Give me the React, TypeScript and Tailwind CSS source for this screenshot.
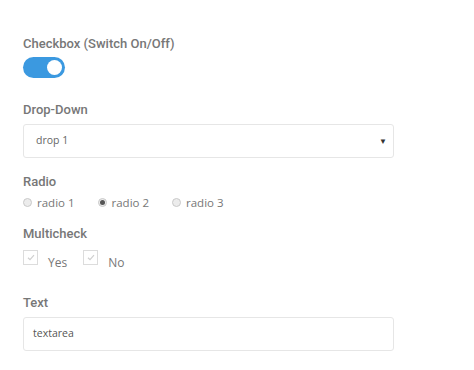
import React from "react";

const font = { fontFamily: '"Open Sans", "Liberation Sans", sans-serif' };
const labelFont = { fontFamily: 'Roboto, "Open Sans", sans-serif' };

function Label({ children, className = "" }: { children: React.ReactNode; className?: string }) {
  return (
    <div className={`text-[13px] leading-[16px] font-medium text-[#777] ${className}`} style={labelFont}>
      {children}
    </div>
  );
}

function Radio({ label, checked }: { label: string; checked?: boolean }) {
  return (
    <div className="flex items-center gap-[5px]">
      <span className="w-[9px] h-[9px] rounded-full border border-[#c9c9c9] bg-[#ececec] flex items-center justify-center">
        {checked && <span className="w-[5px] h-[5px] rounded-full bg-[#555]" />}
      </span>
      <span className="text-[11.5px] text-[#777]">{label}</span>
    </div>
  );
}

function Check({ label }: { label: string }) {
  return (
    <div className="flex items-start gap-[10px]">
      <span className="w-[15px] h-[15px] border border-[#dcdcdc] bg-white flex items-center justify-center">
        <svg width="8" height="7" viewBox="0 0 8 7">
          <path d="M1 3.8 L3 5.6 L7 1.2" fill="none" stroke="#cfcfcf" strokeWidth="1.2" />
        </svg>
      </span>
      <span className="text-[12px] leading-[16px] text-[#777] mt-[5px]">{label}</span>
    </div>
  );
}

export default function App() {
  return (
    <div className="w-[474px] h-[370px] bg-white pl-[23px] pt-[36px]" style={font}>
      <Label>Checkbox (Switch On/Off)</Label>
      <div className="mt-[5px] w-[42px] h-[21px] rounded-full bg-[#3b99e0] flex items-center justify-end pr-[3px]">
        <span className="w-[15px] h-[15px] rounded-full bg-white" />
      </div>

      <Label className="mt-[24px]">Drop-Down</Label>
      <div className="mt-[6px] w-[371px] h-[34px] border border-[#e6e6e6] rounded-[3px] flex items-center justify-between pl-[12px] pr-[6px]">
        <span className="text-[10.5px] text-[#666]">drop 1</span>
        <span className="text-[8px] text-[#333]">▼</span>
      </div>

      <Label className="mt-[16px]">Radio</Label>
      <div className="mt-[4px] flex items-center gap-[23px]">
        <Radio label="radio 1" />
        <Radio label="radio 2" checked />
        <Radio label="radio 3" />
      </div>

      <Label className="mt-[15px]">Multicheck</Label>
      <div className="mt-[8px] flex items-start gap-[16px]">
        <Check label="Yes" />
        <Check label="No" />
      </div>

      <Label className="mt-[24px]">Text</Label>
      <div className="mt-[6px] w-[371px] h-[34px] border border-[#e6e6e6] rounded-[3px] flex items-center pl-[9px]">
        <span className="text-[10.5px] text-[#555]">textarea</span>
      </div>
    </div>
  );
}
